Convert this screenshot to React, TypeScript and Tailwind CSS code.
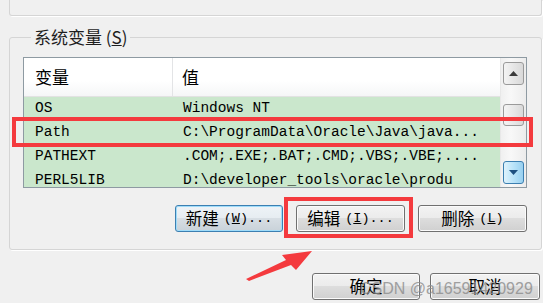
import React from 'react';

const cjk = "font-['Noto_Sans_CJK_SC',_'Noto_Sans',_sans-serif]";
const mono = "font-['Liberation_Mono',_'Noto_Sans_CJK_SC',_monospace]";

const rows = [
  { name: 'OS', value: 'Windows NT' },
  { name: 'Path', value: 'C:\\ProgramData\\Oracle\\Java\\java...' },
  { name: 'PATHEXT', value: '.COM;.EXE;.BAT;.CMD;.VBS;.VBE;....' },
  { name: 'PERL5LIB', value: 'D:\\developer_tools\\oracle\\produ' },
];

function WinButton({
  children,
  width,
  isDefault,
}: {
  children: React.ReactNode;
  width: string;
  isDefault?: boolean;
}) {
  return (
    <div
      className={
        'flex h-[27px] items-center justify-center rounded-[3px] border text-[16.5px] leading-none text-black ' +
        width +
        ' ' +
        cjk +
        (isDefault
          ? ' border-[#3c7fb1] bg-[linear-gradient(#eef3f7_0%,#e6ecf1_50%,#d7dee4_50%,#c9d2d9_100%)] shadow-[inset_0_0_0_1px_#9fdcfa]'
          : ' border-[#707070] bg-[linear-gradient(#f3f3f3_0%,#ebebeb_50%,#dddddd_50%,#d0d0d0_100%)] shadow-[inset_0_0_0_1px_#fbfbfb]')
      }
    >
      {children}
    </div>
  );
}

// ascii part of a button caption, e.g. "(W)..."
function Key({ k, dots }: { k: string; dots?: boolean }) {
  return (
    <span className={'ml-[5px] whitespace-pre text-[13.5px] ' + mono}>
      (<span className="underline">{k}</span>){dots ? '...' : ''}
    </span>
  );
}

function ScrollBtn({ dir, hot }: { dir: 'up' | 'down'; hot?: boolean }) {
  return (
    <div
      className={
        'ml-[2px] flex h-[23px] w-[21px] items-center justify-center rounded-[3px] border ' +
        (hot
          ? 'border-[#3c7fb1] bg-[linear-gradient(90deg,#dff2fc,#b9e3f9_50%,#98d0f0)]'
          : 'border-[#9a9a9a] bg-[linear-gradient(90deg,#f4f4f4,#e6e6e6_50%,#d9d9d9)]')
      }
    >
      <svg width="9" height="5" viewBox="0 0 9 5">
        {dir === 'up' ? (
          <path d="M0 5 L4.5 0 L9 5 Z" fill="#3b3b3b" />
        ) : (
          <path d="M0 0 L4.5 5 L9 0 Z" fill="#1d4f80" />
        )}
      </svg>
    </div>
  );
}

export default function App() {
  return (
    <div className="relative h-[303px] w-[543px] overflow-hidden bg-[#f0f0f0]">
      {/* bottom of the user-variables group above */}
      <div className="ml-[9px] h-[16px] w-[533px] rounded-b-[3px] border-x border-b border-[#d5d5d5] shadow-[1px_1px_0_#ffffff]" />

      <fieldset className="ml-[9px] mt-[11px] w-[533px] rounded-[3px] border border-[#d5d5d5] px-[13px] pb-[17px] shadow-[1px_1px_0_#ffffff]">
        <legend className={'ml-[8px] px-[3px] text-[17px] leading-[20px] text-[#1e1e1e] ' + cjk}>
          系统变量 (<span className="underline">S</span>)
        </legend>

        {/* list view */}
        <div className="mt-[10px] flex h-[131px] w-[504px] overflow-hidden border border-[#8e9aa2]">
          <div className="flex w-[476px] flex-col">
            <div className="flex h-[39px] shrink-0 border-b border-[#e2e2e2] bg-[linear-gradient(#ffffff_0%,#ffffff_60%,#f5f6f7_100%)]">
              <div className={'flex w-[149px] items-center border-r border-[#e3e4e6] pl-[11px] text-[17px] text-black ' + cjk}>
                变量
              </div>
              <div className={'flex flex-1 items-center pl-[9px] text-[17px] text-black ' + cjk}>值</div>
            </div>
            {rows.map((r) => (
              <div key={r.name} className={'flex h-[24px] shrink-0 items-center bg-[#cae7cc] text-[14.5px] text-black ' + mono}>
                <div className="w-[159px] shrink-0 pl-[11px]">{r.name}</div>
                <div className="whitespace-pre">{r.value}</div>
              </div>
            ))}
          </div>
          <div className="flex w-[26px] flex-col border-l border-[#e8e8e8] bg-[linear-gradient(90deg,#f0f0f0,#f8f8f8_40%,#ececec)] pt-[4px]">
            <ScrollBtn dir="up" />
            <div className="ml-[2px] mt-[19px] h-[22px] w-[21px] rounded-[3px] border border-[#9a9a9a] bg-[linear-gradient(90deg,#f4f4f4,#e8e8e8_50%,#d9d9d9)]" />
            <div className="mb-[3px] mt-auto">
              <ScrollBtn dir="down" hot />
            </div>
          </div>
        </div>

        <div className="mt-[17px] flex justify-end gap-[13px] pr-[1px]">
          <WinButton width="w-[108px]" isDefault>
            新建<Key k="W" dots />
          </WinButton>
          <WinButton width="w-[109px]">
            编辑<Key k="I" dots />
          </WinButton>
          <WinButton width="w-[109px]">
            删除<Key k="L" />
          </WinButton>
        </div>
      </fieldset>

      <div className="mt-[23px] flex justify-end gap-[10px] pr-[3px]">
        <WinButton width="w-[108px]">确定</WinButton>
        <WinButton width="w-[110px]">取消</WinButton>
      </div>

      {/* annotations */}
      <div className="pointer-events-none absolute left-[12px] top-[117px] h-[30px] w-[521px] border-[4px] border-[#f43a3e]" />
      <div className="pointer-events-none absolute left-[284px] top-[197px] h-[41px] w-[129px] border-[4px] border-[#f43a3e]" />
      <svg className="pointer-events-none absolute left-0 top-0" width="543" height="303">
        <polygon points="246,279 286,260 282,255 312,251 296,270 291,265 249,281" fill="#f43a3e" />
      </svg>
      <div className="pointer-events-none absolute left-[360px] top-[279px] font-['Liberation_Sans',_sans-serif] text-[16px] leading-[20px] text-[#8c8c8c] opacity-80">
        CSDN @a16591420929
      </div>
    </div>
  );
}
